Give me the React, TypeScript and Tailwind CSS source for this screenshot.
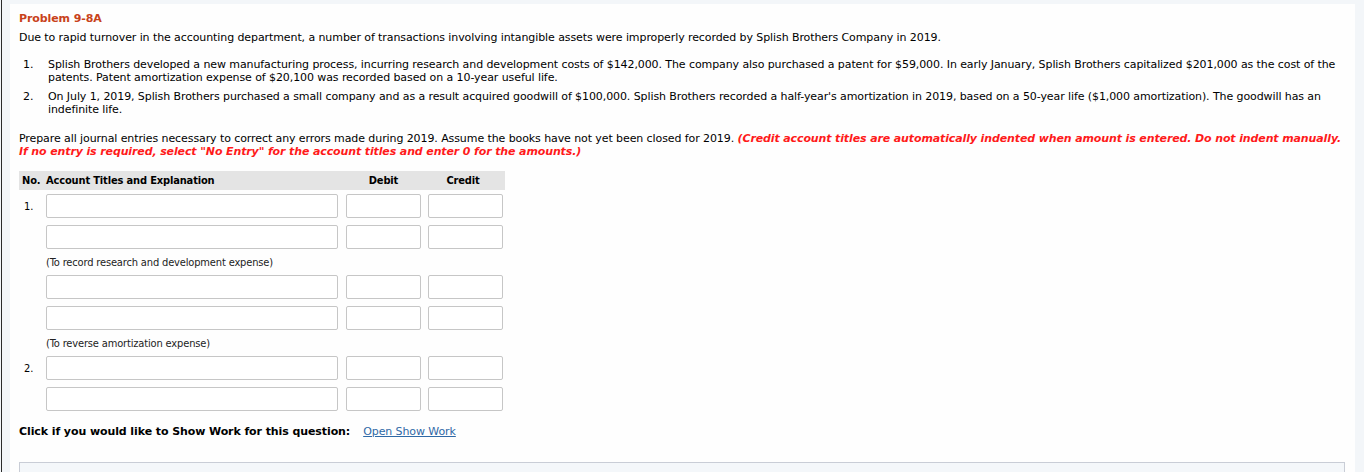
const verdana = "font-['DejaVu_Sans',Verdana,sans-serif] tracking-[-0.09px]";
const tahoma = "font-['DejaVu_Sans_Condensed',Tahoma,sans-serif]";

type Row = { no?: string; note?: string };

const rows: Row[] = [
  { no: "1." },
  { note: "(To record research and development expense)" },
  {},
  { note: "(To reverse amortization expense)" },
  { no: "2." },
  {},
];

function Inputs() {
  return (
    <>
      <input className="w-[292px] h-[24px] border border-[#c6c6c6] rounded-[2px] bg-white" />
      <input className="w-[75px] h-[24px] border border-[#c6c6c6] rounded-[2px] bg-white ml-[8px]" />
      <input className="w-[75px] h-[24px] border border-[#c6c6c6] rounded-[2px] bg-white ml-[7px]" />
    </>
  );
}

export default function App() {
  return (
    <div className="w-[1364px] h-[472px] overflow-hidden bg-[#f3f6f9] flex">
      <div className="w-[1px] bg-[#2b2b2b] ml-[1px]" />
      <div className="flex-1 pl-[8px] pt-[4px] pr-[9px] flex">
        <div className="flex-1 bg-[#fefefe] pl-[9px] pt-[8px] text-[#000] text-[11px] leading-[13px]">
          <div className={`${verdana} font-bold text-[#c8421a] text-[11px]`}>Problem 9-8A</div>
          <p className={`${verdana} mt-[6px]`}>
            Due to rapid turnover in the accounting department, a number of transactions involving intangible assets were improperly recorded by Splish Brothers Company in 2019.
          </p>
          <ol className={`${verdana} mt-[14px] flex flex-col gap-[6px]`}>
            <li className="flex">
              <span className="w-[29px] pl-[4px] shrink-0">1.</span>
              <span className="pr-[10px]">
                Splish Brothers developed a new manufacturing process, incurring research and development costs of $142,000. The company also purchased a patent for $59,000. In early January, Splish Brothers capitalized $201,000 as the cost of the patents. Patent amortization expense of $20,100 was recorded based on a 10-year useful life.
              </span>
            </li>
            <li className="flex">
              <span className="w-[29px] pl-[4px] shrink-0">2.</span>
              <span className="pr-[10px]">
                On July 1, 2019, Splish Brothers purchased a small company and as a result acquired goodwill of $100,000. Splish Brothers recorded a half-year's amortization in 2019, based on a 50-year life ($1,000 amortization). The goodwill has an indefinite life.
              </span>
            </li>
          </ol>
          <p className={`${verdana} mt-[16px] pr-[1px]`}>
            Prepare all journal entries necessary to correct any errors made during 2019. Assume the books have not yet been closed for 2019.{" "}
            <span className="text-[#ff1a1a] font-bold italic tracking-[-0.12px]">
              (Credit account titles are automatically indented when amount is entered. Do not indent manually.
              <br />
              If no entry is required, select "No Entry" for the account titles and enter 0 for the amounts.)
            </span>
          </p>
          <div className={`${tahoma} mt-[13px] w-[486px] h-[19px] bg-[#e4e4e4] flex items-center font-bold tracking-[-0.15px]`}>
            <span className="w-[27px] pl-[3px]">No.</span>
            <span className="w-[300px]">Account Titles and Explanation</span>
            <span className="w-[75px] text-center">Debit</span>
            <span className="w-[84px] text-center">Credit</span>
          </div>
          <div className={`${tahoma} mt-[4px] flex flex-col`}>
            {rows.map((r, i) => (
              <div key={i} className="flex flex-col">
                <div className="flex items-center h-[24px]">
                  <span className="w-[27px] pl-[5px]">{r.no}</span>
                  <Inputs />
                </div>
                {r.note ? (
                  <div className="pl-[27px] h-[26px] pt-[7px] text-[#222] tracking-[-0.15px]">{r.note}</div>
                ) : (
                  <div className="h-[7px]" />
                )}
              </div>
            ))}
          </div>
          <div className="mt-[7px] flex items-center">
            <span className={`${verdana} font-bold`}>Click if you would like to Show Work for this question:</span>
            <a href="#" className={`${verdana} ml-[13px] text-[#2f69a6] underline`}>Open Show Work</a>
          </div>
          <div className="mt-[24px] mr-[10px] h-[40px] border border-[#c9cdd6] bg-[#f4f7fa]" />
        </div>
      </div>
    </div>
  );
}
